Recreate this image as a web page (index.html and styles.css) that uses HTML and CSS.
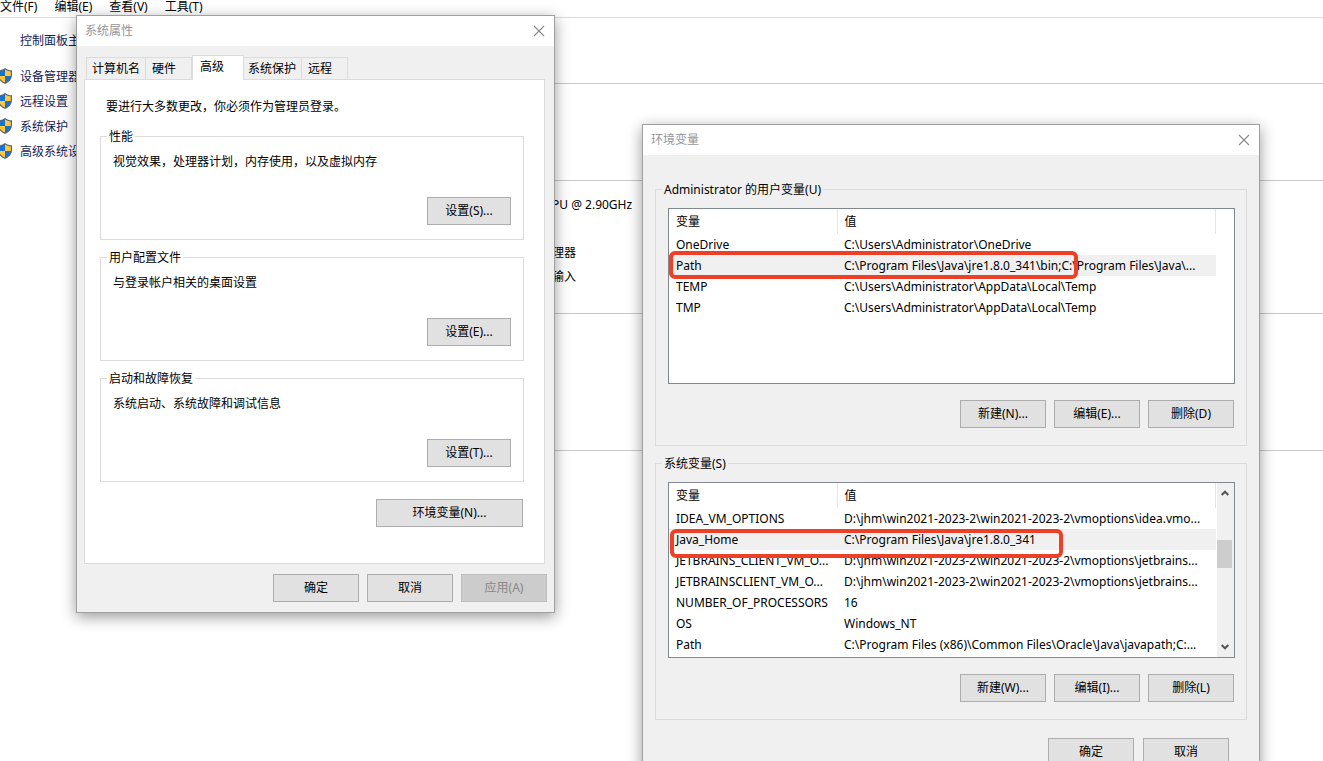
FILE: index.html
```html
<!DOCTYPE html>
<html lang="zh-CN">
<head>
    <meta charset="utf-8">
    <title>环境变量</title>
    <link rel="stylesheet" href="styles.css">
</head>
<body>
    <svg class="defs" width="0" height="0" aria-hidden="true">
        <symbol id="shield" viewBox="0 0 16 16">
            <path d="M8 0 C6 1.6 3.6 2.3 1 2.3 V7 C1 11.4 4 14.2 8 16 C12 14.2 15 11.4 15 7 V2.3 C12.4 2.3 10 1.6 8 0Z" fill="#5b6670"/>
            <path d="M8 1.6 C6.2 2.8 4.2 3.4 2.2 3.5 V8 H8Z" fill="#1673d2"/>
            <path d="M8 1.6 C9.8 2.8 11.8 3.4 13.8 3.5 V8 H8Z" fill="#ffc83a"/>
            <path d="M2.2 8 H8 V14.6 C4.6 12.9 2.5 10.9 2.2 8Z" fill="#ffc83a"/>
            <path d="M13.8 8 H8 V14.6 C11.4 12.9 13.5 10.9 13.8 8Z" fill="#1673d2"/>
        </symbol>
        <symbol id="close" viewBox="0 0 12 12">
            <path d="M1 1 L11 11 M11 1 L1 11" stroke="#8a8a8a" stroke-width="1.1" fill="none"/>
        </symbol>
    </svg>

    <!-- control panel behind the dialogs -->
    <nav class="menubar">
        <a href="#">文件(F)</a>
        <a href="#">编辑(E)</a>
        <a href="#">查看(V)</a>
        <a href="#">工具(T)</a>
    </nav>
    <div class="panel">
        <aside class="sidebar">
            <a class="home" href="#">控制面板主页</a>
            <a href="#"><svg class="shield"><use href="#shield"/></svg>设备管理器</a>
            <a href="#"><svg class="shield"><use href="#shield"/></svg>远程设置</a>
            <a href="#"><svg class="shield"><use href="#shield"/></svg>系统保护</a>
            <a href="#"><svg class="shield"><use href="#shield"/></svg>高级系统设置</a>
        </aside>
        <main class="info">
            <section class="heading"></section>
            <section class="edition"></section>
            <section class="specs">
                <p>PU @ 2.90GHz</p>
                <p></p>
                <p>理器</p>
                <p>输入</p>
            </section>
            <section class="computer"></section>
        </main>
    </div>

    <div class="window props">
        <header class="titlebar">
            <span>系统属性</span>
            <button class="close" aria-label="关闭"><svg><use href="#close"/></svg></button>
        </header>
        <div class="tabs">
            <button class="tab">计算机名</button>
            <button class="tab tab-short">硬件</button>
            <button class="tab active">高级</button>
            <button class="tab">系统保护</button>
            <button class="tab tab-short">远程</button>
        </div>
        <div class="page">
            <p class="note">要进行大多数更改，你必须作为管理员登录。</p>
            <fieldset>
                <legend>性能</legend>
                <p>视觉效果，处理器计划，内存使用，以及虚拟内存</p>
                <button class="btn">设置(S)...</button>
            </fieldset>
            <fieldset>
                <legend>用户配置文件</legend>
                <p>与登录帐户相关的桌面设置</p>
                <button class="btn">设置(E)...</button>
            </fieldset>
            <fieldset>
                <legend>启动和故障恢复</legend>
                <p>系统启动、系统故障和调试信息</p>
                <button class="btn">设置(T)...</button>
            </fieldset>
            <button class="btn btn-env">环境变量(N)...</button>
        </div>
        <div class="actions">
            <button class="btn">确定</button>
            <button class="btn">取消</button>
            <button class="btn" disabled>应用(A)</button>
        </div>
    </div>

    <div class="window env">
        <header class="titlebar">
            <span>环境变量</span>
            <button class="close" aria-label="关闭"><svg><use href="#close"/></svg></button>
        </header>
        <fieldset>
            <legend>Administrator 的用户变量(U)</legend>
            <div class="list">
                <table>
                    <thead>
                        <tr><th class="name">变量</th><th>值</th></tr>
                    </thead>
                    <tbody>
                        <tr><td>OneDrive</td><td>C:\Users\Administrator\OneDrive</td></tr>
                        <tr class="selected"><td>Path</td><td>C:\Program Files\Java\jre1.8.0_341\bin;C:\Program Files\Java\...</td></tr>
                        <tr><td>TEMP</td><td>C:\Users\Administrator\AppData\Local\Temp</td></tr>
                        <tr><td>TMP</td><td>C:\Users\Administrator\AppData\Local\Temp</td></tr>
                    </tbody>
                </table>
                <div class="mark mark-path"></div>
            </div>
            <div class="actions">
                <button class="btn">新建(N)...</button>
                <button class="btn">编辑(E)...</button>
                <button class="btn">删除(D)</button>
            </div>
        </fieldset>
        <fieldset>
            <legend>系统变量(S)</legend>
            <div class="list">
                <table>
                    <thead>
                        <tr><th class="name">变量</th><th>值</th></tr>
                    </thead>
                    <tbody>
                        <tr><td>IDEA_VM_OPTIONS</td><td>D:\jhm\win2021-2023-2\win2021-2023-2\vmoptions\idea.vmo...</td></tr>
                        <tr class="selected"><td>Java_Home</td><td>C:\Program Files\Java\jre1.8.0_341</td></tr>
                        <tr><td>JETBRAINS_CLIENT_VM_O...</td><td>D:\jhm\win2021-2023-2\win2021-2023-2\vmoptions\jetbrains...</td></tr>
                        <tr><td>JETBRAINSCLIENT_VM_O...</td><td>D:\jhm\win2021-2023-2\win2021-2023-2\vmoptions\jetbrains...</td></tr>
                        <tr><td>NUMBER_OF_PROCESSORS</td><td>16</td></tr>
                        <tr><td>OS</td><td>Windows_NT</td></tr>
                        <tr><td>Path</td><td>C:\Program Files (x86)\Common Files\Oracle\Java\javapath;C:...</td></tr>
                    </tbody>
                </table>
                <div class="scrollbar">
                    <button aria-label="向上"><svg viewBox="0 0 8 6"><path d="M0.7 5 L4 1.7 L7.3 5" stroke="#555" stroke-width="2" fill="none"/></svg></button>
                    <div class="track"><div class="thumb"></div></div>
                    <button aria-label="向下"><svg viewBox="0 0 8 6"><path d="M0.7 1 L4 4.3 L7.3 1" stroke="#555" stroke-width="2" fill="none"/></svg></button>
                </div>
                <div class="mark mark-java"></div>
            </div>
            <div class="actions">
                <button class="btn">新建(W)...</button>
                <button class="btn">编辑(I)...</button>
                <button class="btn">删除(L)</button>
            </div>
        </fieldset>
        <div class="actions">
            <button class="btn">确定</button>
            <button class="btn">取消</button>
        </div>
    </div>
</body>
</html>
```

FILE: styles.css
```css
* {
    box-sizing: border-box;
}
body {
    margin: 0;
    height: 100vh;
    overflow: hidden;
    position: relative;
    background: #fff;
    color: #000;
    font: 12px/16px "Noto Sans", "Noto Sans CJK SC", sans-serif;
}
p {
    margin: 0;
}
a {
    color: inherit;
    text-decoration: none;
}
button {
    font: inherit;
    color: inherit;
    padding: 0;
    margin: 0;
    border: 0;
    background: none;
}
.defs {
    position: absolute;
}

/* control panel */
.menubar {
    display: flex;
    gap: 17px;
    height: 18px;
    border-bottom: 1px solid #dadada;
    line-height: 14px;
}
.panel {
    display: flex;
}
.sidebar {
    width: 190px;
    padding-top: 10px;
    color: #151c55;
}
.sidebar a {
    display: flex;
    align-items: center;
    height: 25px;
}
.sidebar .home {
    padding-left: 20px;
    margin-bottom: 11px;
}
.shield {
    width: 16px;
    height: 16px;
    margin: 0 7px 2px -3px;
}
.info {
    flex: 1;
}
.info section {
    border-bottom: 1px solid #c8c8c8;
}
.heading {
    height: 66px;
}
.edition {
    height: 97px;
}
.specs {
    height: 133px;
    padding: 12px 0 0 362px;
}
.specs p {
    height: 24px;
    line-height: 24px;
}
.computer {
    height: 137px;
}

/* dialogs */
.window {
    position: absolute;
    background: #f0f0f0;
    border: 1px solid #a0a0a0;
    box-shadow: 0 4px 14px rgba(0, 0, 0, 0.4);
}
.titlebar {
    display: flex;
    justify-content: space-between;
    align-items: center;
    height: 30px;
    padding: 0 9px 0 8px;
    background: #fff;
    color: #969696;
}
.close {
    width: 12px;
    height: 12px;
}
.close svg {
    display: block;
    width: 12px;
    height: 12px;
}
fieldset {
    margin: 0;
    padding: 0;
    border: 1px solid #dcdcdc;
}
legend {
    margin-left: -6px;
    padding: 2px 2px 0;
}
.btn {
    width: 86px;
    height: 28px;
    border: 1px solid #adadad;
    background: #e1e1e1;
    text-align: center;
}
.btn:disabled {
    border-color: #bfbfbf;
    background: #ccc;
    color: #888;
}
.actions {
    display: flex;
    justify-content: flex-end;
    gap: 8px;
}

.props {
    left: 76px;
    top: 15px;
    width: 479px;
    padding-bottom: 10px;
}
.tabs {
    display: flex;
    align-items: flex-end;
    height: 33px;
    margin: 0 9px;
}
.tab {
    height: 22px;
    padding: 0 5px;
    border: 1px solid #dcdcdc;
    border-width: 1px 1px 0 0;
    text-align: left;
}
.tab:first-child {
    border-left-width: 1px;
}
.tab-short {
    width: 46px;
    padding-left: 6px;
}
.tab.active {
    position: relative;
    width: 52px;
    height: 25px;
    padding: 0 7px 2px;
    margin-bottom: -1px;
    border-left-width: 1px;
    background: #fff;
}
.tab.active + .tab {
    padding-left: 4px;
}
.page {
    margin: 0 9px 10px 7px;
    padding: 19px 20px 36px 15px;
    border: 1px solid #dcdcdc;
    background: #fff;
}
.note {
    padding-left: 6px;
    margin-bottom: 12px;
}
.page fieldset {
    margin-bottom: 8px;
    padding: 9px 12px 0;
    height: 113px;
}
.page fieldset .btn {
    display: block;
    width: 84px;
    margin: 27px 0 0 auto;
}
.btn-env {
    display: block;
    width: 147px;
    margin: 17px 1px 0 auto;
}
.props > .actions {
    padding-right: 7px;
}

.env {
    left: 642px;
    top: 124px;
    width: 618px;
    height: 660px;
}
.env .titlebar {
    margin-bottom: 25px;
}
.env fieldset {
    margin: 0 12px 8px;
    height: 266px;
    padding: 10px 11px 0 12px;
}
.env fieldset .actions {
    padding-right: 1px;
}
.env > .actions {
    gap: 9px;
    padding: 10px 30px 0 0;
}
.list {
    position: relative;
    display: flex;
    justify-content: space-between;
    height: 176px;
    margin-bottom: 16px;
    border: 1px solid #828790;
    background: #fff;
}
.list table {
    width: 547px;
    table-layout: fixed;
    border-collapse: collapse;
    align-self: flex-start;
}
.list th,
.list td {
    height: 21px;
    padding: 0 0 0 7px;
    overflow: hidden;
    white-space: nowrap;
    text-align: left;
    font-weight: normal;
}
.list th {
    height: 25px;
    border-right: 1px solid #e5e5e5;
}
.list .name {
    width: 168px;
}
.selected {
    background: #f0f0f0;
}
.scrollbar {
    display: flex;
    flex-direction: column;
    width: 17px;
    background: #f0f0f0;
}
.scrollbar button {
    width: 15px;
    height: 20px;
    line-height: 0;
}
.scrollbar svg {
    width: 8px;
    height: 6px;
}
.track {
    flex: 1;
    padding-top: 37px;
}
.thumb {
    width: 15px;
    height: 28px;
    background: #cdcdcd;
}
.mark {
    position: absolute;
    border: 4px solid #ee4027;
    border-radius: 6px;
}
.mark-path {
    left: 0;
    top: 42px;
    width: 409px;
    height: 28px;
}
.mark-java {
    left: 1px;
    top: 46px;
    width: 393px;
    height: 29px;
}
```
